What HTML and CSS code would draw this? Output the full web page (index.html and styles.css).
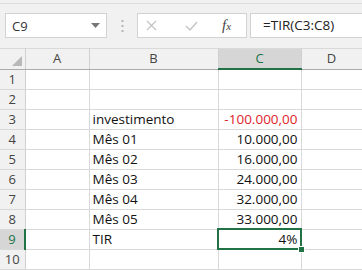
FILE: index.html
```html
<!DOCTYPE html>
<html lang="pt">
<head>
    <meta charset="UTF-8">
    <title>TIR</title>
    <link rel="stylesheet" href="styles.css">
</head>
<body>
<!--barra de fórmulas-->
<div class="formula-bar">
    <div class="name-box">
        <span>C9</span>
        <svg class="drop" width="9" height="5" viewBox="0 0 9 5"><path d="M0 0h9L4.5 5z" fill="#777"/></svg>
    </div>
    <div class="grip">
        <svg width="3" height="12" viewBox="0 0 3 12">
            <rect x="0.5" y="0" width="2" height="2" fill="#b5b5b5"/>
            <rect x="0.5" y="5" width="2" height="2" fill="#b5b5b5"/>
            <rect x="0.5" y="10" width="2" height="2" fill="#b5b5b5"/>
        </svg>
    </div>
    <div class="fx-buttons">
        <svg class="btn-x" width="11" height="11" viewBox="0 0 11 11"><path d="M1 1l9 9M10 1l-9 9" stroke="#c4c4c4" stroke-width="1.3" fill="none"/></svg>
        <svg class="btn-ok" width="13" height="10" viewBox="0 0 13 10"><path d="M1 5l4 4 7-8" stroke="#c4c4c4" stroke-width="1.4" fill="none"/></svg>
        <span class="fx">f<small>x</small></span>
    </div>
    <div class="formula-input">=TIR(C3:C8)</div>
</div>

<!--planilha-->
<table class="sheet">
    <colgroup>
        <col class="w-head">
        <col class="w-a">
        <col class="w-b">
        <col class="w-c">
        <col class="w-d">
    </colgroup>
    <tr class="col-heads">
        <th class="corner"><span class="tri"></span></th>
        <th>A</th>
        <th>B</th>
        <th class="on">C</th>
        <th>D</th>
    </tr>
    <tr><th>1</th><td></td><td></td><td></td><td></td></tr>
    <tr><th>2</th><td></td><td></td><td></td><td></td></tr>
    <tr><th>3</th><td></td><td>investimento</td><td class="num neg">-100.000,00</td><td></td></tr>
    <tr><th>4</th><td></td><td>Mês 01</td><td class="num">10.000,00</td><td></td></tr>
    <tr><th>5</th><td></td><td>Mês 02</td><td class="num">16.000,00</td><td></td></tr>
    <tr><th>6</th><td></td><td>Mês 03</td><td class="num">24.000,00</td><td></td></tr>
    <tr><th>7</th><td></td><td>Mês 04</td><td class="num">32.000,00</td><td></td></tr>
    <tr><th>8</th><td></td><td>Mês 05</td><td class="num">33.000,00</td><td></td></tr>
    <tr><th class="on">9</th><td></td><td>TIR</td><td class="num active">4%</td><td></td></tr>
    <tr><th>10</th><td></td><td></td><td></td><td></td></tr>
</table>
</body>
</html>
```

FILE: styles.css
```css
body {
    margin: 0;
    width: 362px;
    height: 270px;
    overflow: hidden;
    background: #f1f1f1;
    font-family: "Open Sans", "Noto Sans", sans-serif;
    color: #222;
}

.formula-bar {
    display: flex;
    align-items: flex-start;
    height: 45px;
    margin-top: 3px;
    padding-top: 9px;
    box-sizing: border-box;
    border-top: 1px solid #dcdcdc;
}

.name-box {
    display: flex;
    align-items: center;
    justify-content: space-between;
    width: 102px;
    height: 25px;
    margin-left: 5px;
    padding: 0 6px 0 6px;
    box-sizing: border-box;
    background: #fff;
    border: 1px solid #d2d2d2;
    font-size: 13px;
    color: #333;
}

.grip {
    width: 30px;
    height: 25px;
    display: flex;
    align-items: center;
    justify-content: center;
}

.fx-buttons {
    display: flex;
    align-items: center;
    width: 110px;
    height: 25px;
    box-sizing: border-box;
    background: #fff;
    border: 1px solid #d2d2d2;
}

.btn-x {
    margin-left: 8px;
}

.btn-ok {
    margin-left: 28px;
}

.fx {
    margin-left: 24px;
    font-family: "Liberation Serif", serif;
    font-style: italic;
    font-size: 15px;
    color: #444;
}

.fx small {
    font-size: 11px;
}

.formula-input {
    flex: 1;
    height: 25px;
    margin-left: 3px;
    padding-left: 12px;
    box-sizing: border-box;
    background: #fff;
    border: 1px solid #d2d2d2;
    border-right: none;
    font-size: 13.5px;
    line-height: 23px;
    color: #222;
}

.sheet {
    width: 362px;
    table-layout: fixed;
    border-collapse: collapse;
    background: #fff;
    font-size: 13.5px;
}

.w-head { width: 25px; }
.w-a { width: 64px; }
.w-b { width: 129px; }
.w-c { width: 83px; }
.w-d { width: 61px; }

.sheet tr {
    height: 20px;
}

.sheet th,
.sheet td {
    height: 20px;
    padding: 0 3px;
    box-sizing: border-box;
    white-space: nowrap;
    overflow: visible;
    font-weight: normal;
    line-height: 19px;
}

.sheet td {
    border-right: 1px solid #d9d9d9;
    border-bottom: 1px solid #d9d9d9;
    color: #111;
}

.sheet th {
    background: #f1f1f1;
    color: #444;
    text-align: center;
    border-right: 1px solid #d0d0d0;
    border-bottom: 1px solid #d9d9d9;
    font-size: 13px;
    padding: 0;
}

.col-heads th {
    border-top: 1px solid #d9d9d9;
    border-bottom: 1px solid #ababab;
}

.col-heads th.on {
    background: #d6d6d6;
    color: #217346;
    border-bottom: 2px solid #217346;
}

.sheet th.on {
    background: #d6d6d6;
    color: #217346;
}

tr th.on:first-child {
    border-right: 2px solid #217346;
}

.corner {
    position: relative;
}

.tri {
    position: absolute;
    right: 3px;
    bottom: 3px;
    width: 0;
    height: 0;
    border-left: 10px solid transparent;
    border-bottom: 10px solid #b8b8b8;
}

.sheet .num {
    text-align: right;
}

.sheet .neg {
    color: #e0242a;
}

.active {
    position: relative;
}

.active::after {
    content: "";
    position: absolute;
    left: -2px;
    top: -2px;
    right: -1px;
    bottom: -1px;
    border: 2px solid #217346;
}

.active::before {
    content: "";
    position: absolute;
    right: -4px;
    bottom: -4px;
    width: 5px;
    height: 5px;
    background: #217346;
    border: 1px solid #fff;
    z-index: 1;
}
```
